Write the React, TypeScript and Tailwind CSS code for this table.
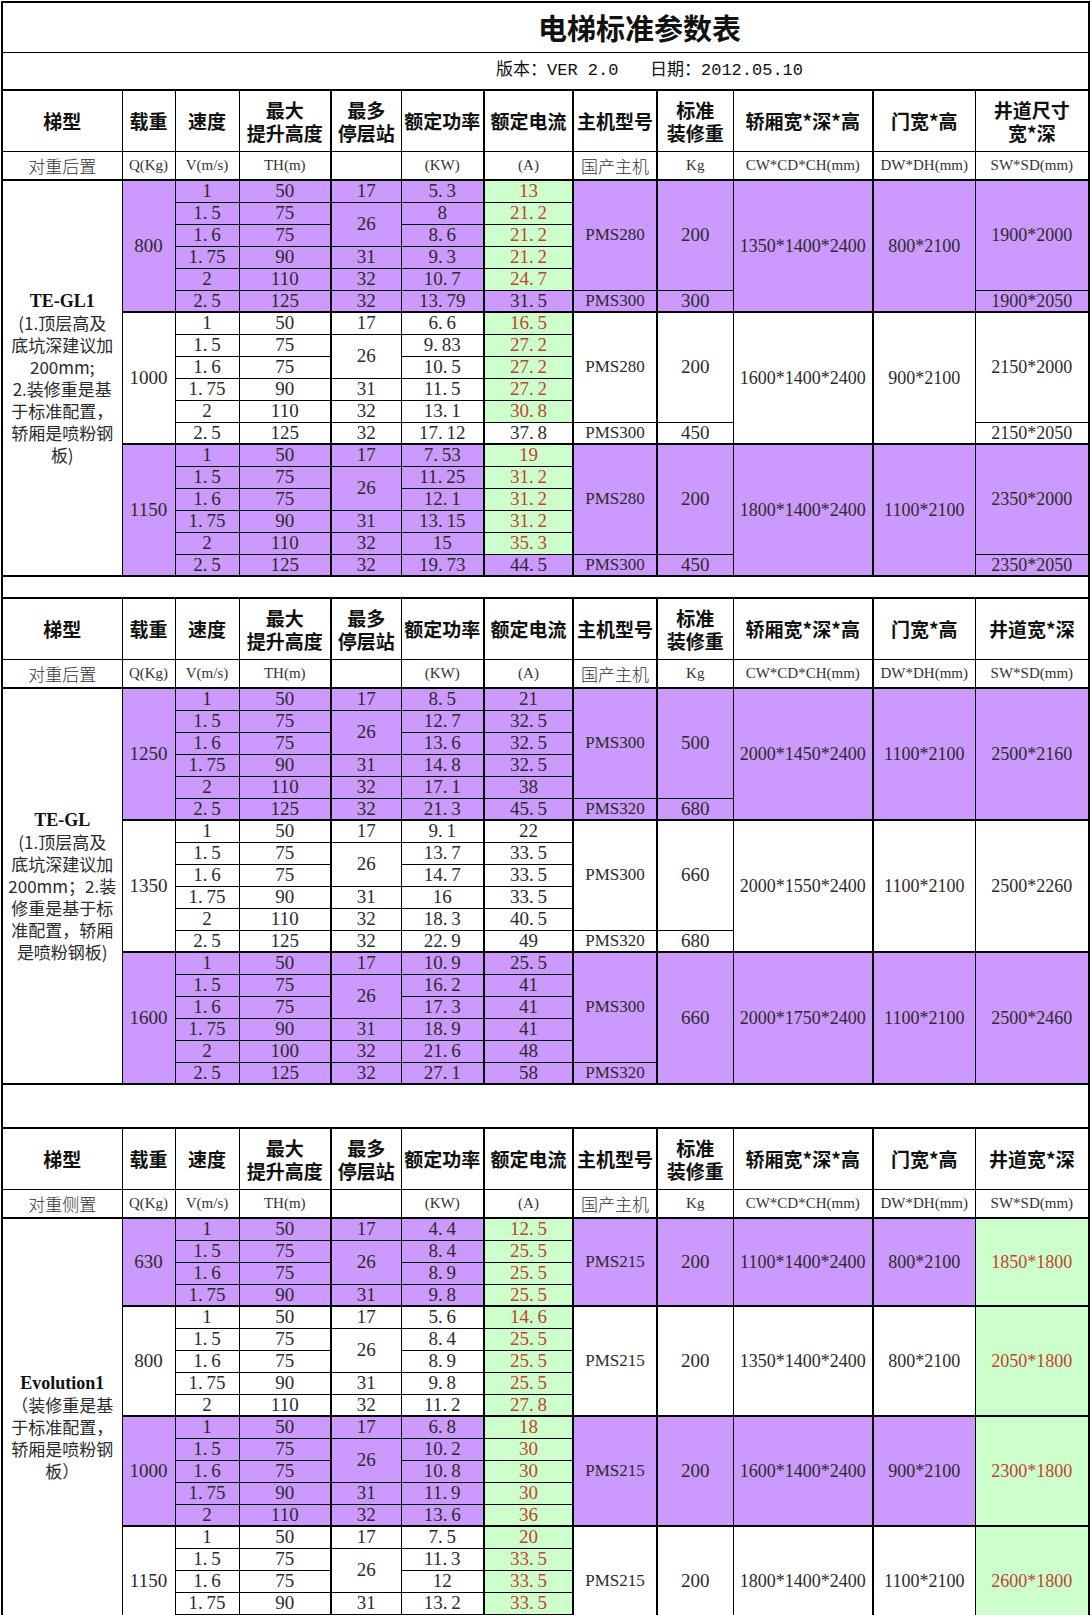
import clsx from "clsx";

const NUM = "[font-family:'Liberation_Serif','Noto_Sans_CJK_SC',serif]";
const CJK = "[font-family:'Noto_Sans_CJK_SC',sans-serif]";

const PURPLE = "bg-[#cc99ff]";
const GREEN = "bg-[#ccffcc]";
const RED = "text-[#c0452c]";

// columns where the line on the left is heavy
const THICK_L = [false, false, false, false, true, false, true, true, true, false, true, false];

type Span = [string, number];

type Group = {
  load: string;
  purple: boolean;
  speeds: string[];
  th: string[];
  stops: (Span | null)[];
  kw: string[];
  amps: string[];
  green: boolean[];
  main: Span[];
  dec: Span[];
  car: string;
  door: string;
  shaft: Span[];
  shaftGreen?: boolean;
};

type Section = {
  lastHead: string[];
  unit0: string;
  label: string[];
  groups: Group[];
};

const S6 = ["1", "1.5", "1.6", "1.75", "2", "2.5"];
const TH6 = ["50", "75", "75", "90", "110", "125"];
const ST6: (Span | null)[] = [["17", 1], ["26", 2], null, ["31", 1], ["32", 1], ["32", 1]];
const ST5: (Span | null)[] = [["17", 1], ["26", 2], null, ["31", 1], ["32", 1]];
const ST4: (Span | null)[] = [["17", 1], ["26", 2], null, ["31", 1]];
const G5 = [true, true, true, true, true, false];
const NO6 = [false, false, false, false, false, false];

const sections: Section[] = [
  {
    lastHead: ["井道尺寸", "宽*深"],
    unit0: "对重后置",
    label: ["TE-GL1", "(1.顶层高及", "底坑深建议加", "200mm;", "2.装修重是基", "于标准配置，", "轿厢是喷粉钢", "板)"],
    groups: [
      {
        load: "800", purple: true, speeds: S6, th: TH6, stops: ST6,
        kw: ["5.3", "8", "8.6", "9.3", "10.7", "13.79"],
        amps: ["13", "21.2", "21.2", "21.2", "24.7", "31.5"], green: G5,
        main: [["PMS280", 5], ["PMS300", 1]], dec: [["200", 5], ["300", 1]],
        car: "1350*1400*2400", door: "800*2100", shaft: [["1900*2000", 5], ["1900*2050", 1]],
      },
      {
        load: "1000", purple: false, speeds: S6, th: TH6, stops: ST6,
        kw: ["6.6", "9.83", "10.5", "11.5", "13.1", "17.12"],
        amps: ["16.5", "27.2", "27.2", "27.2", "30.8", "37.8"], green: G5,
        main: [["PMS280", 5], ["PMS300", 1]], dec: [["200", 5], ["450", 1]],
        car: "1600*1400*2400", door: "900*2100", shaft: [["2150*2000", 5], ["2150*2050", 1]],
      },
      {
        load: "1150", purple: true, speeds: S6, th: TH6, stops: ST6,
        kw: ["7.53", "11.25", "12.1", "13.15", "15", "19.73"],
        amps: ["19", "31.2", "31.2", "31.2", "35.3", "44.5"], green: G5,
        main: [["PMS280", 5], ["PMS300", 1]], dec: [["200", 5], ["450", 1]],
        car: "1800*1400*2400", door: "1100*2100", shaft: [["2350*2000", 5], ["2350*2050", 1]],
      },
    ],
  },
  {
    lastHead: ["井道宽*深"],
    unit0: "对重后置",
    label: ["TE-GL", "(1.顶层高及", "底坑深建议加", "200mm；2.装", "修重是基于标", "准配置，轿厢", "是喷粉钢板)"],
    groups: [
      {
        load: "1250", purple: true, speeds: S6, th: TH6, stops: ST6,
        kw: ["8.5", "12.7", "13.6", "14.8", "17.1", "21.3"],
        amps: ["21", "32.5", "32.5", "32.5", "38", "45.5"], green: NO6,
        main: [["PMS300", 5], ["PMS320", 1]], dec: [["500", 5], ["680", 1]],
        car: "2000*1450*2400", door: "1100*2100", shaft: [["2500*2160", 6]],
      },
      {
        load: "1350", purple: false, speeds: S6, th: TH6, stops: ST6,
        kw: ["9.1", "13.7", "14.7", "16", "18.3", "22.9"],
        amps: ["22", "33.5", "33.5", "33.5", "40.5", "49"], green: NO6,
        main: [["PMS300", 5], ["PMS320", 1]], dec: [["660", 5], ["680", 1]],
        car: "2000*1550*2400", door: "1100*2100", shaft: [["2500*2260", 6]],
      },
      {
        load: "1600", purple: true, speeds: S6, th: ["50", "75", "75", "90", "100", "125"], stops: ST6,
        kw: ["10.9", "16.2", "17.3", "18.9", "21.6", "27.1"],
        amps: ["25.5", "41", "41", "41", "48", "58"], green: NO6,
        main: [["PMS300", 5], ["PMS320", 1]], dec: [["660", 6]],
        car: "2000*1750*2400", door: "1100*2100", shaft: [["2500*2460", 6]],
      },
    ],
  },
  {
    lastHead: ["井道宽*深"],
    unit0: "对重侧置",
    label: ["Evolution1", "（装修重是基", "于标准配置，", "轿厢是喷粉钢", "板）"],
    groups: [
      {
        load: "630", purple: true, speeds: ["1", "1.5", "1.6", "1.75"], th: ["50", "75", "75", "90"], stops: ST4,
        kw: ["4.4", "8.4", "8.9", "9.8"],
        amps: ["12.5", "25.5", "25.5", "25.5"], green: [true, true, true, true],
        main: [["PMS215", 4]], dec: [["200", 4]],
        car: "1100*1400*2400", door: "800*2100", shaft: [["1850*1800", 4]], shaftGreen: true,
      },
      {
        load: "800", purple: false, speeds: ["1", "1.5", "1.6", "1.75", "2"], th: ["50", "75", "75", "90", "110"], stops: ST5,
        kw: ["5.6", "8.4", "8.9", "9.8", "11.2"],
        amps: ["14.6", "25.5", "25.5", "25.5", "27.8"], green: [true, true, true, true, true],
        main: [["PMS215", 5]], dec: [["200", 5]],
        car: "1350*1400*2400", door: "800*2100", shaft: [["2050*1800", 5]], shaftGreen: true,
      },
      {
        load: "1000", purple: true, speeds: ["1", "1.5", "1.6", "1.75", "2"], th: ["50", "75", "75", "90", "110"], stops: ST5,
        kw: ["6.8", "10.2", "10.8", "11.9", "13.6"],
        amps: ["18", "30", "30", "30", "36"], green: [true, true, true, true, true],
        main: [["PMS215", 5]], dec: [["200", 5]],
        car: "1600*1400*2400", door: "900*2100", shaft: [["2300*1800", 5]], shaftGreen: true,
      },
      {
        // the last row runs past the bottom of the page
        load: "1150", purple: false, speeds: ["1", "1.5", "1.6", "1.75", ""], th: ["50", "75", "75", "90", ""],
        stops: [["17", 1], ["26", 2], null, ["31", 1], ["", 1]],
        kw: ["7.5", "11.3", "12", "13.2", ""],
        amps: ["20", "33.5", "33.5", "33.5", ""], green: [true, true, true, true, true],
        main: [["PMS215", 5]], dec: [["200", 5]],
        car: "1800*1400*2400", door: "1100*2100", shaft: [["2600*1800", 5]], shaftGreen: true,
      },
    ],
  },
];

function Num({ t }: { t: string }) {
  const i = t.indexOf(".");
  if (i < 0) return <span>{t}</span>;
  return (
    <span className="inline-flex">
      <span>{t.slice(0, i)}</span>
      <span className="w-[0.45em] text-left">.</span>
      <span>{t.slice(i + 1)}</span>
    </span>
  );
}

function Td({
  col, top, bg, span, className, children,
}: {
  col: number; top?: boolean; bg?: string; span?: number; className?: string; children?: React.ReactNode;
}) {
  return (
    <td
      rowSpan={span}
      className={clsx(
        "border border-black p-0 text-center align-middle",
        THICK_L[col] && "border-l-2",
        top && "border-t-2",
        bg ?? "bg-white",
        className
      )}
    >
      <div className="flex flex-col items-center justify-center">{children}</div>
    </td>
  );
}

function spanAt(list: Span[], i: number): Span | null {
  let r = 0;
  for (const s of list) {
    if (r === i) return s;
    r += s[1];
  }
  return null;
}

function HeadRows({ s }: { s: Section }) {
  const heads: string[][] = [
    ["梯型"], ["载重"], ["速度"], ["最大", "提升高度"], ["最多", "停层站"], ["额定功率"], ["额定电流"],
    ["主机型号"], ["标准", "装修重"], ["轿厢宽*深*高"], ["门宽*高"], s.lastHead,
  ];
  const units = [s.unit0, "Q(Kg)", "V(m/s)", "TH(m)", "", "(KW)", "(A)", "国产主机", "Kg", "CW*CD*CH(mm)", "DW*DH(mm)", "SW*SD(mm)"];
  return (
    <>
      <tr className="h-[61px]">
        {heads.map((h, i) => (
          <Td key={i} col={i} top className={clsx(CJK, "text-[19px] leading-[23px] font-bold text-[#111]")}>
            {h.map((l, j) => (
              <div key={j} className="whitespace-nowrap">{l}</div>
            ))}
          </Td>
        ))}
      </tr>
      <tr className="h-[29px]">
        {units.map((u, i) => (
          <Td
            key={i}
            col={i}
            className={clsx(
              "text-[#333] whitespace-nowrap",
              i === 0 || i === 7 ? clsx(CJK, "text-[17px] font-light") : clsx(NUM, "text-[15px]")
            )}
          >
            {u}
          </Td>
        ))}
      </tr>
    </>
  );
}

function SectionRows({ s }: { s: Section }) {
  const total = s.groups.reduce((n, g) => n + g.speeds.length, 0);
  const rows: React.ReactNode[] = [];
  const num = clsx(NUM, "text-[19px] leading-[20px] text-[#2b2b2b] whitespace-nowrap");
  const wide = clsx(NUM, "text-[18px] leading-[20px] text-[#2b2b2b] whitespace-nowrap");
  const model = clsx(NUM, "text-[17px] leading-[20px] text-[#2b2b2b] whitespace-nowrap");
  s.groups.forEach((g, gi) => {
    const bg = g.purple ? PURPLE : "bg-white";
    const n = g.speeds.length;
    for (let i = 0; i < n; i++) {
      const top = i === 0;
      const main = spanAt(g.main, i);
      const dec = spanAt(g.dec, i);
      const shaft = spanAt(g.shaft, i);
      const st = g.stops[i];
      rows.push(
        <tr key={`${gi}-${i}`} className="h-[22px]">
          {gi === 0 && i === 0 && (
            <Td col={0} span={total} top className="text-[#2b2b2b]">
              {s.label.map((l, j) => (
                <div
                  key={j}
                  className={clsx(
                    "whitespace-nowrap leading-[22px]",
                    j === 0 ? clsx(NUM, "text-[18px] font-bold text-[#111]") : clsx(CJK, "text-[17px]")
                  )}
                >
                  {l}
                </div>
              ))}
            </Td>
          )}
          {top && (
            <Td col={1} span={n} top bg={bg} className={num}>
              {g.load}
            </Td>
          )}
          <Td col={2} top={top} bg={bg} className={num}><Num t={g.speeds[i]} /></Td>
          <Td col={3} top={top} bg={bg} className={num}>{g.th[i]}</Td>
          {st && (
            <Td col={4} top={top} bg={bg} span={st[1]} className={num}>{st[0]}</Td>
          )}
          <Td col={5} top={top} bg={bg} className={num}><Num t={g.kw[i]} /></Td>
          <Td
            col={6}
            top={top}
            bg={g.green[i] ? GREEN : bg}
            className={clsx(num, g.green[i] && RED)}
          >
            <Num t={g.amps[i]} />
          </Td>
          {main && (
            <Td col={7} top={top} bg={bg} span={main[1]} className={model}>{main[0]}</Td>
          )}
          {dec && (
            <Td col={8} top={top} bg={bg} span={dec[1]} className={num}>{dec[0]}</Td>
          )}
          {top && (
            <Td col={9} top bg={bg} span={n} className={wide}>{g.car}</Td>
          )}
          {top && (
            <Td col={10} top bg={bg} span={n} className={wide}>{g.door}</Td>
          )}
          {shaft && (
            <Td
              col={11}
              top={top}
              bg={g.shaftGreen ? GREEN : bg}
              span={shaft[1]}
              className={clsx(wide, g.shaftGreen && RED)}
            >
              {shaft[0]}
            </Td>
          )}
        </tr>
      );
    }
  });
  return <>{rows}</>;
}

function Blank({ h }: { h: string }) {
  return (
    <tr className={h}>
      <td colSpan={12} className="border-x-2 border-t-2 border-black bg-white p-0" />
    </tr>
  );
}

export default function App() {
  return (
    <div className="w-[1090px] h-[1615px] overflow-hidden bg-white">
      <table className="table-fixed border-collapse border-2 border-black w-[1087px] ml-[1px] mt-[1px]">
        <colgroup>
          <col className="w-[120px]" />
          <col className="w-[53px]" />
          <col className="w-[64px]" />
          <col className="w-[92px]" />
          <col className="w-[70px]" />
          <col className="w-[83px]" />
          <col className="w-[89px]" />
          <col className="w-[84px]" />
          <col className="w-[76px]" />
          <col className="w-[140px]" />
          <col className="w-[102px]" />
          <col className="w-[114px]" />
        </colgroup>
        <tbody>
          <tr className="h-[50px]">
            <td colSpan={12} className="border border-black p-0 align-middle">
              <div className={clsx(CJK, "pl-[535px] text-[29px] font-bold leading-none text-[#111]")}>电梯标准参数表</div>
            </td>
          </tr>
          <tr className="h-[38px]">
            <td colSpan={12} className="border border-black border-b-2 p-0 align-middle">
              <div className="flex pl-[493px] text-[17px] text-[#111] [font-family:'Liberation_Mono','Noto_Sans_CJK_SC',monospace]">
                <span className="w-[154px] whitespace-nowrap">版本：VER 2.0</span>
                <span className="whitespace-nowrap">日期：2012.05.10</span>
              </div>
            </td>
          </tr>
          <HeadRows s={sections[0]} />
          <SectionRows s={sections[0]} />
          <Blank h="h-[22px]" />
          <HeadRows s={sections[1]} />
          <SectionRows s={sections[1]} />
          <Blank h="h-[44px]" />
          <HeadRows s={sections[2]} />
          <SectionRows s={sections[2]} />
        </tbody>
      </table>
    </div>
  );
}
